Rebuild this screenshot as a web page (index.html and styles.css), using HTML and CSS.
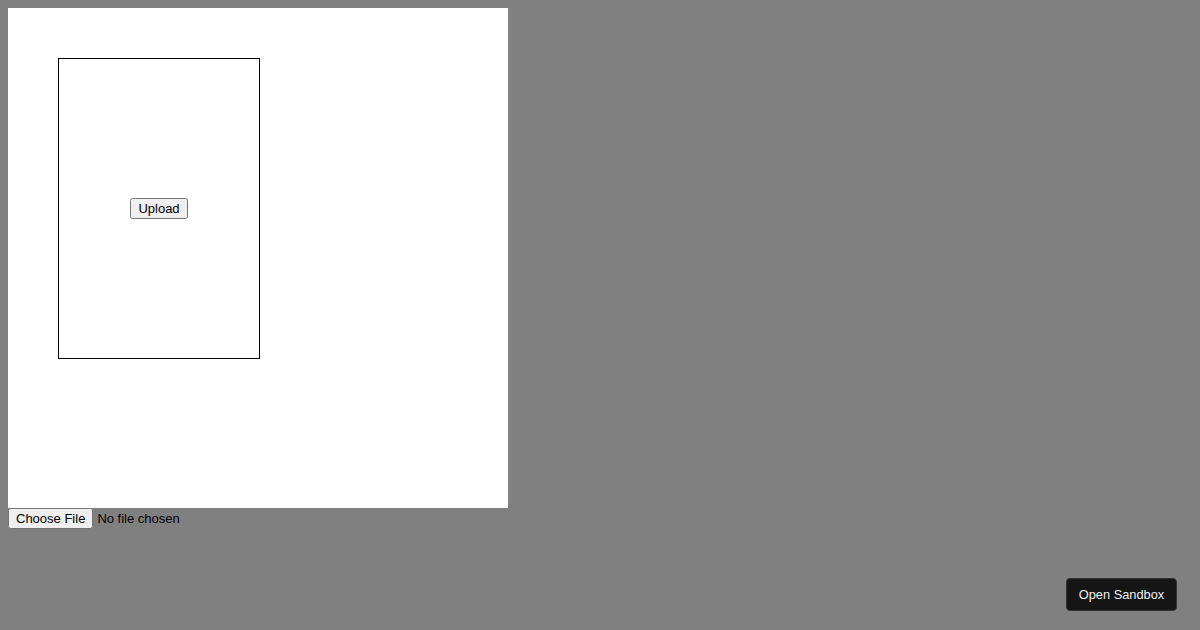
FILE: index.html
```html
<!DOCTYPE html>
<html>
<head>
<meta charset="utf-8">
<link rel="stylesheet" href="styles.css">
</head>
<body>
<div class="stage">
  <div class="frame">
    <button class="upload" type="button">Upload</button>
  </div>
</div>
<input class="file" type="file">
<button class="sandbox" type="button">Open Sandbox</button>
</body>
</html>
```

FILE: styles.css
```css
html, body {
  height: 100%;
}
body {
  margin: 8px;
  background: #808080;
  font-family: "Liberation Sans", Arial, sans-serif;
}
.stage {
  width: 500px;
  height: 500px;
  background: #fff;
  padding: 50px;
  box-sizing: border-box;
}
.frame {
  width: 202px;
  height: 301px;
  box-sizing: border-box;
  border: 1px solid #000;
  display: flex;
  align-items: center;
  justify-content: center;
  padding-bottom: 1px;
}
.upload, .file {
  font-family: "Liberation Sans", Arial, sans-serif;
  font-size: 13px;
}
.file {
  display: block;
  margin: 0;
  color: #000;
}
.sandbox {
  position: fixed;
  right: 23px;
  bottom: 19px;
  width: 111px;
  height: 33px;
  background: #151515;
  color: #f0f0f0;
  border: 1px solid #333;
  border-radius: 4px;
  font-family: "Liberation Sans", Arial, sans-serif;
  font-size: 12.8px;
  padding: 0;
}
```
